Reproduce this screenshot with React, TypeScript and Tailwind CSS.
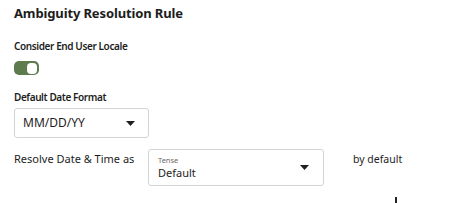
import * as React from "react";

function Caret() {
  return (
    <svg width="9" height="5" viewBox="0 0 9 5" className="shrink-0">
      <path d="M0 0h9L4.5 5z" fill="#1f1f1f" />
    </svg>
  );
}

function Toggle({ on }: { on: boolean }) {
  return (
    <div
      className={
        "flex h-[14px] w-[25px] items-center rounded-[5px] px-[2px] " +
        (on ? "justify-end bg-[#5d7b4c]" : "justify-start bg-[#9a9a9a]")
      }
    >
      <div className="h-[11px] w-[10px] rounded-[4px] bg-white" />
    </div>
  );
}

export default function App() {
  return (
    <div className="relative h-[203px] w-[474px] overflow-hidden bg-white font-['Noto_Sans',sans-serif] text-[#1d1d1d]">
      <div className="flex flex-col px-[14px] pt-[4px]">
        <h2 className="text-[13px] font-bold leading-[18px] tracking-[-0.01em]">Ambiguity Resolution Rule</h2>

        <div className="mt-[16px] text-[10px] font-semibold leading-[16px] tracking-[-0.04em]">Consider End User Locale</div>
        <div className="mt-[7px]">
          <Toggle on />
        </div>

        <div className="mt-[14px] text-[10px] font-semibold leading-[16px] tracking-[-0.04em]">Default Date Format</div>
        <div className="mt-[3px] flex h-[30px] w-[135px] items-center justify-between rounded-[3px] border border-[#d4d4d4] pl-[8px] pr-[13px]">
          <span className="text-[12px] leading-none">MM/DD/YY</span>
          <Caret />
        </div>

        <div className="mt-[11px] flex items-start">
          <span className="w-[134px] whitespace-nowrap pt-[1px] text-[11px] leading-[18px]">Resolve Date &amp; Time as</span>
          <div className="flex h-[37px] w-[176px] items-center justify-between rounded-[3px] border border-[#d4d4d4] pl-[9px] pr-[14px]">
            <div className="flex flex-col">
              <span className="text-[7.5px] leading-[10px] text-[#6a6a6a]">Tense</span>
              <span className="text-[11px] leading-[15px]">Default</span>
            </div>
            <Caret />
          </div>
          <span className="ml-[29px] pt-[2px] text-[10.5px] leading-[16px]">by default</span>
        </div>
      </div>
      <div className="absolute left-[395px] top-[197px] h-[6px] w-[1.5px] bg-[#222]" />
    </div>
  );
}
